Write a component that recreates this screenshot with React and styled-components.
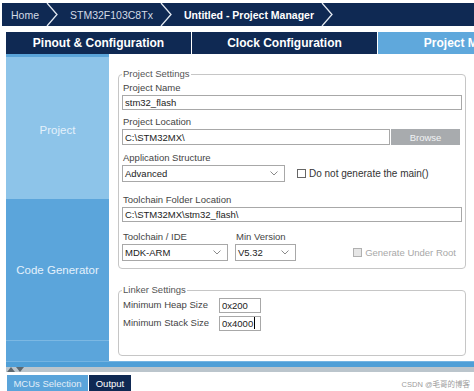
import React from "react";
import styled, { createGlobalStyle } from "styled-components";

const NAVY = "#0f2953";
const ACTIVE = "#5fa8dc";

const Global = createGlobalStyle`
  html, body { margin: 0; padding: 0; background: #fff; }
  body { font-family: "Liberation Sans", Arial, sans-serif; }
  * { box-sizing: border-box; }
`;

const Frame = styled.div`
  width: 474px;
  height: 391px;
  overflow: hidden;
  display: flex;
  flex-direction: column;
`;

const Breadcrumb = styled.nav`
  margin: 3px 0 0 2px;
  height: 23px;
  background: ${NAVY};
  display: flex;
  align-items: center;
  padding-left: 9px;
  font-size: 10.5px;
  white-space: nowrap;
`;

const Crumb = styled.span`
  color: ${(p) => (p.$current ? "#ffffff" : "#d3dbe6")};
  font-weight: ${(p) => (p.$current ? 700 : 400)};
`;

const ChevronSvg = styled.svg`
  flex: none;
  margin: 0 12px 0 7px;
`;

const Chevron = () => (
  <ChevronSvg width="12" height="23" viewBox="0 0 12 23">
    <polyline points="1,0 11,11.5 1,23" fill="none" stroke="#e3e9f1" strokeWidth="1.3" />
  </ChevronSvg>
);

const Tabs = styled.div`
  margin: 6px 0 0 6px;
  height: 23px;
  display: flex;
  gap: 1px;
  overflow: hidden;
`;

const Tab = styled.div`
  flex: 0 0 185px;
  display: flex;
  align-items: center;
  justify-content: center;
  background: ${(p) => (p.$active ? ACTIVE : NAVY)};
  color: #fff;
  font-size: 12px;
  font-weight: 700;
  white-space: nowrap;
`;

const Workspace = styled.div`
  margin-left: 6px;
  display: flex;
  flex-direction: column;
`;

const ContentRow = styled.div`
  display: flex;
  height: 307px;
`;

const SideNav = styled.div`
  width: 103px;
  flex: none;
  display: flex;
  flex-direction: column;
  border-top: 3px solid #5aa4d9;
`;

const SideItem = styled.div`
  height: ${(p) => p.$h}px;
  flex: none;
  background: ${(p) => p.$bg};
  border-top: ${(p) => (p.$line ? "1px solid #7cb8e3" : "none")};
  display: flex;
  align-items: center;
  justify-content: center;
  padding-top: ${(p) => p.$pt || 0}px;
  color: #e4f1fb;
  font-size: 11.5px;
`;

const Main = styled.div`
  flex: 1;
  background: #fff;
  padding: 14px 8px 0 9px;
  min-width: 0;
`;

const Group = styled.fieldset`
  margin: ${(p) => p.$mt || 0}px 0 0 0;
  padding: 0 3px ${(p) => p.$pb}px 3px;
  border: 1px solid #c6c6c6;
  border-radius: 4px;
  min-width: 0;
`;

const Legend = styled.legend`
  padding: 0 1px;
  font-size: 9.5px;
  line-height: 12px;
  color: #555;
`;

const Label = styled.div`
  font-size: 9.5px;
  line-height: 12px;
  color: #444;
  padding-left: 1px;
  margin: ${(p) => p.$mt || 0}px 0 1px 0;
  white-space: nowrap;
`;

const Box = styled.div`
  width: ${(p) => p.$w}px;
  height: ${(p) => p.$h || 15}px;
  flex: none;
  border: 1px solid #a8a8a8;
  background: #fff;
  display: flex;
  align-items: center;
  padding: 0 2px;
  font-size: 9.5px;
  color: #222;
  white-space: nowrap;
  overflow: hidden;
`;

const SelectBox = styled(Box)`
  justify-content: space-between;
  padding-right: 6px;
`;

const Caret = styled.svg`
  flex: none;
`;

const Select = ({ w, children }) => (
  <SelectBox $w={w} $h={17}>
    <span>{children}</span>
    <Caret width="8" height="5" viewBox="0 0 8 5">
      <polyline points="0.5,0.5 4,4 7.5,0.5" fill="none" stroke="#8a8a8a" strokeWidth="1" />
    </Caret>
  </SelectBox>
);

const Row = styled.div`
  display: flex;
  align-items: ${(p) => p.$align || "center"};
  gap: ${(p) => p.$gap || 0}px;
`;

const Button = styled.div`
  width: 69px;
  height: 16px;
  background: #a8abae;
  color: #f1f3f5;
  font-size: 9.5px;
  display: flex;
  align-items: center;
  justify-content: center;
`;

const Check = styled.span`
  width: 9px;
  height: 9px;
  flex: none;
  border: 1px solid ${(p) => (p.$disabled ? "#b0b0b0" : "#666")};
  background: ${(p) => (p.$disabled ? "#e6e6e6" : "#fff")};
`;

const CheckLabel = styled.label`
  display: flex;
  align-items: center;
  gap: 3px;
  height: 17px;
  margin-left: ${(p) => (p.$push ? "auto" : `${p.$ml || 0}px`)};
  margin-right: ${(p) => p.$mr || 0}px;
  font-size: ${(p) => (p.$disabled ? 9.5 : 10)}px;
  color: ${(p) => (p.$disabled ? "#a8a8a8" : "#333")};
  white-space: nowrap;
`;

const Column = styled.div`
  display: flex;
  flex-direction: column;
  margin-left: ${(p) => p.$ml || 0}px;
`;

const LinkerGrid = styled.div`
  display: grid;
  grid-template-columns: 97px 42px;
  grid-auto-rows: 16px;
  row-gap: 2px;
  align-items: center;
  margin-top: 1px;
`;

const TextCursor = styled.span`
  width: 1px;
  height: 12px;
  background: #000;
  margin-left: 1px;
`;

const BlueBar = styled.div`
  height: 6px;
  background: #4f9fd7;
  border-top: 1px solid #74b4e2;
`;

const GrayBar = styled.div`
  height: 5px;
  background: #bbc5cc;
  display: flex;
  align-items: center;
  gap: 1px;
  padding-left: 1px;
`;

const BottomRow = styled.div`
  display: flex;
  align-items: stretch;
  height: 16px;
  margin: 3px 0 0 1px;
`;

const BottomTab = styled.div`
  width: ${(p) => p.$w}px;
  background: ${(p) => (p.$dark ? NAVY : "#5aa4da")};
  color: ${(p) => (p.$dark ? "#ffffff" : "#e2eef8")};
  font-size: 9.5px;
  display: flex;
  align-items: center;
  justify-content: center;
  margin-right: 1px;
  white-space: nowrap;
`;

const Watermark = styled.span`
  margin-left: auto;
  margin-right: 4px;
  align-self: center;
  font-size: 7.5px;
  color: #9c9c9c;
  font-family: "Liberation Sans", "Noto Sans CJK SC", sans-serif;
  white-space: nowrap;
`;

export default function App() {
  return (
    <>
      <Global />
      <Frame>
        <Breadcrumb>
          <Crumb>Home</Crumb>
          <Chevron />
          <Crumb>STM32F103C8Tx</Crumb>
          <Chevron />
          <Crumb $current>Untitled - Project Manager</Crumb>
          <Chevron />
        </Breadcrumb>

        <Tabs>
          <Tab>Pinout &amp; Configuration</Tab>
          <Tab>Clock Configuration</Tab>
          <Tab $active>Project Manager</Tab>
        </Tabs>

        <Workspace>
          <ContentRow>
            <SideNav>
              <SideItem $h={142} $bg="#8dc4e9" $pt={3}>Project</SideItem>
              <SideItem $h={141} $bg="#5ba5db" $pt={1}>Code Generator</SideItem>
              <SideItem $h={21} $bg="#5ba5db" $line />
            </SideNav>

            <Main>
              <Group $pb={7}>
                <Legend>Project Settings</Legend>
                <Label $mt={2}>Project Name</Label>
                <Box $w={340}>stm32_flash</Box>

                <Label $mt={6}>Project Location</Label>
                <Row $gap={1}>
                  <Box $w={268} $h={16}>C:\STM32MX\</Box>
                  <Button>Browse</Button>
                </Row>

                <Label $mt={7}>Application Structure</Label>
                <Row>
                  <Select w={163}>Advanced</Select>
                  <CheckLabel $ml={12}>
                    <Check />
                    Do not generate the main()
                  </CheckLabel>
                </Row>

                <Label $mt={12}>Toolchain Folder Location</Label>
                <Box $w={340}>C:\STM32MX\stm32_flash\</Box>

                <Row $align="flex-end">
                  <Column>
                    <Label $mt={9}>Toolchain / IDE</Label>
                    <Select w={106}>MDK-ARM</Select>
                  </Column>
                  <Column $ml={7}>
                    <Label $mt={9}>Min Version</Label>
                    <Select w={61}>V5.32</Select>
                  </Column>
                  <CheckLabel $disabled $push $mr={6}>
                    <Check $disabled />
                    Generate Under Root
                  </CheckLabel>
                </Row>
              </Group>

              <Group $mt={15} $pb={24}>
                <Legend>Linker Settings</Legend>
                <LinkerGrid>
                  <Label>Minimum Heap Size</Label>
                  <Box $w={42}>0x200</Box>
                  <Label>Minimum Stack Size</Label>
                  <Box $w={42}>
                    0x4000
                    <TextCursor />
                  </Box>
                </LinkerGrid>
              </Group>
            </Main>
          </ContentRow>

          <BlueBar />
          <GrayBar>
            <svg width="8" height="5" viewBox="0 0 8 5">
              <polygon points="0,5 4,0 8,5" fill="#5d6870" />
            </svg>
            <svg width="8" height="5" viewBox="0 0 8 5">
              <polygon points="0,0 8,0 4,5" fill="#5d6870" />
            </svg>
          </GrayBar>

          <BottomRow>
            <BottomTab $w={81}>MCUs Selection</BottomTab>
            <BottomTab $w={42} $dark>Output</BottomTab>
            <Watermark>CSDN @毛哥的博客</Watermark>
          </BottomRow>
        </Workspace>
      </Frame>
    </>
  );
}
